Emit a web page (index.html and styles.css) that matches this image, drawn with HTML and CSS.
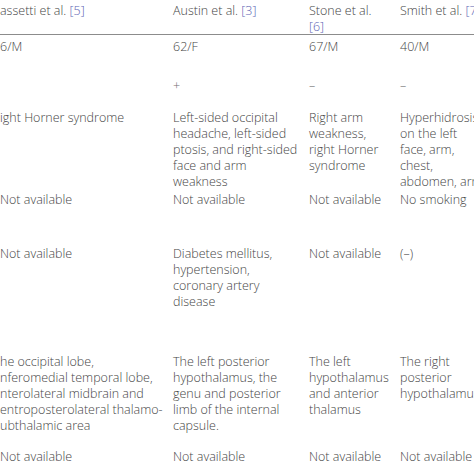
FILE: index.html
```html
<!DOCTYPE html>
<html>
<head>
<meta charset="utf-8">
<link rel="stylesheet" href="styles.css">
</head>
<body>
<table class="tbl">
  <colgroup>
    <col class="c1"><col class="c2"><col class="c3"><col class="c4">
  </colgroup>
  <thead>
    <tr>
      <th>assetti et al. <span class="ref">[5]</span></th>
      <th>Austin et al. <span class="ref">[3]</span></th>
      <th>Stone et al.<br><span class="ref">[6]</span></th>
      <th>Smith et al. <span class="ref">[7]</span></th>
    </tr>
  </thead>
  <tbody>
    <tr class="r1">
      <td>6/M</td><td>62/F</td><td>67/M</td><td>40/M</td>
    </tr>
    <tr class="r2">
      <td></td><td class="sign">+</td><td class="sign">–</td><td class="sign">–</td>
    </tr>
    <tr class="r3">
      <td>ight Horner syndrome</td>
      <td>Left-sided occipital<br>headache, left-sided<br>ptosis, and right-sided<br>face and arm<br>weakness</td>
      <td>Right arm<br>weakness,<br>right Horner<br>syndrome</td>
      <td>Hyperhidrosis<br>on the left<br>face, arm,<br>chest,<br>abdomen, arm</td>
    </tr>
    <tr class="r4">
      <td>Not available</td><td>Not available</td><td>Not available</td><td>No smoking</td>
    </tr>
    <tr class="r5">
      <td>Not available</td>
      <td>Diabetes mellitus,<br>hypertension,<br>coronary artery<br>disease</td>
      <td>Not available</td>
      <td>(–)</td>
    </tr>
    <tr class="r6">
      <td>he occipital lobe,<br>nferomedial temporal lobe,<br>nterolateral midbrain and<br>entroposterolateral thalamo-<br>ubthalamic area</td>
      <td>The left posterior<br>hypothalamus, the<br>genu and posterior<br>limb of the internal<br>capsule.</td>
      <td>The left<br>hypothalamus<br>and anterior<br>thalamus</td>
      <td>The right<br>posterior<br>hypothalamus</td>
    </tr>
    <tr class="r7">
      <td>Not available</td><td>Not available</td><td>Not available</td><td>Not available</td>
    </tr>
  </tbody>
</table>
</body>
</html>
```
FILE: styles.css
```css
html, body {
  margin: 0;
  padding: 0;
  background: #ffffff;
  overflow: hidden;
  width: 474px;
  height: 474px;
}
.tbl {
  border-collapse: collapse;
  table-layout: fixed;
  width: 530px;
  font-family: "Open Sans", "Liberation Sans", sans-serif;
  font-size: 12.5px;
  line-height: 16px;
  color: #454545;
}
.c1 { width: 173px; }
.c2 { width: 136px; }
.c3 { width: 91px; }
.c4 { width: 130px; }
th, td {
  padding: 0;
  text-align: left;
  vertical-align: top;
  white-space: nowrap;
  font-weight: 300;
}
th {
  padding-top: 3px;
  line-height: 15.5px;
  border-bottom: 1.5px solid #8c8c8c;
}
.ref { color: #5b5fb3; }
.sign { color: #707070; }
.r1 td { padding-top: 4px; }
.r2 td { padding-top: 23px; }
.r3 td { padding-top: 16px; }
.r4 td { padding-top: 1.5px; }
.r5 td { padding-top: 38.5px; }
.r6 td { padding-top: 44px; }
.r7 td { padding-top: 15px; }
```
